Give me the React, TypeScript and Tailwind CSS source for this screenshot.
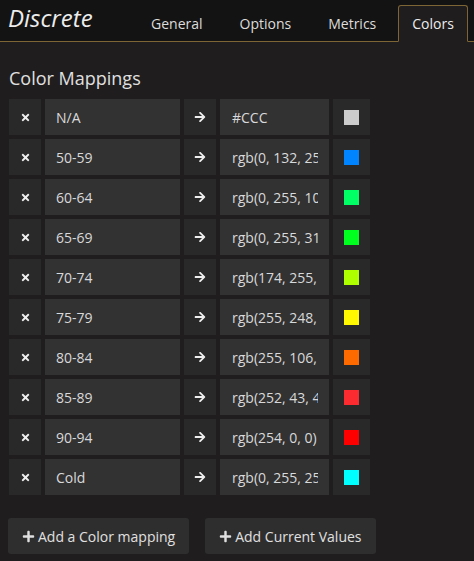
import React from "react";
import { FaTimes, FaArrowRight, FaPlus } from "react-icons/fa";

const rows: { from: string; to: string; color: string }[] = [
  { from: "N/A", to: "#CCC", color: "#cccccc" },
  { from: "50-59", to: "rgb(0, 132, 255)", color: "rgb(0, 132, 255)" },
  { from: "60-64", to: "rgb(0, 255, 100)", color: "rgb(0, 255, 100)" },
  { from: "65-69", to: "rgb(0, 255, 31)", color: "rgb(0, 255, 31)" },
  { from: "70-74", to: "rgb(174, 255, 0)", color: "rgb(174, 255, 0)" },
  { from: "75-79", to: "rgb(255, 248, 0)", color: "rgb(255, 248, 0)" },
  { from: "80-84", to: "rgb(255, 106, 0)", color: "rgb(255, 106, 0)" },
  { from: "85-89", to: "rgb(252, 43, 48)", color: "rgb(252, 43, 48)" },
  { from: "90-94", to: "rgb(254, 0, 0)", color: "rgb(254, 0, 0)" },
  { from: "Cold", to: "rgb(0, 255, 255)", color: "rgb(0, 255, 255)" },
];

export default function App() {
  return (
    <div
      className="w-[474px] h-[561px] bg-[#1f1d1d] text-[#d8d9da] overflow-hidden"
      style={{ fontFamily: '"Open Sans", "Noto Sans", sans-serif' }}
    >
      <div className="h-[42px] bg-[#141313] border-b border-[#7d6535] flex items-end">
        <div className="self-stretch flex items-center pl-[8px] pb-[5px] text-[24px] italic text-[#ececec] w-[136px]">
          Discrete
        </div>
        <div className="flex gap-[7px] h-[37px] -mb-px">
          {["General", "Options", "Metrics"].map((t) => (
            <div key={t} className="px-[14px] flex items-center text-[14px] text-[#dcdcdc] border border-transparent">
              {t}
            </div>
          ))}
          <div className="px-[13px] flex items-center text-[14px] text-[#ececec] bg-[#1f1d1d] border border-[#7d6535] border-b-[#1f1d1d] rounded-t-[3px]">
            Colors
          </div>
        </div>
      </div>

      <div className="px-[9px]">
        <div className="pt-[24px] pb-[8px] text-[18px] leading-[25px] text-[#e0e0e0]">Color Mappings</div>
        <div className="flex flex-col gap-[4px]">
          {rows.map((r) => (
            <div key={r.from} className="flex gap-[4px] h-[36px] text-[14px]">
              <div className="w-[32px] bg-[#2a2929] flex items-center justify-center">
                <FaTimes className="text-[#eeeeee] w-[11px] h-[11px]" />
              </div>
              <div className="w-[135px] bg-[#333232] flex items-center px-[11px]">
                <span className="overflow-hidden whitespace-nowrap">{r.from}</span>
              </div>
              <div className="w-[32px] bg-[#2a2929] flex items-center justify-center">
                <FaArrowRight className="text-[#eeeeee] w-[12px] h-[12px]" />
              </div>
              <div className="w-[109px] bg-[#333232] flex items-center pl-[12px] pr-[11px]">
                <span className="overflow-hidden whitespace-nowrap">{r.to}</span>
              </div>
              <div className="w-[37px] bg-[#2a2929] flex items-center justify-center">
                <div className="w-[15px] h-[15px]" style={{ backgroundColor: r.color }} />
              </div>
            </div>
          ))}
        </div>
        <div className="flex gap-[16px] mt-[23px] -ml-px">
          <div className="h-[36px] px-[14px] bg-[#2f2e2e] rounded-[3px] flex items-center gap-[3px] text-[14px] text-[#e0e0e0]">
            <FaPlus className="w-[13px] h-[13px]" />
            <span>Add a Color mapping</span>
          </div>
          <div className="h-[36px] px-[14px] bg-[#2f2e2e] rounded-[3px] flex items-center gap-[3px] text-[14px] text-[#e0e0e0]">
            <FaPlus className="w-[13px] h-[13px]" />
            <span>Add Current Values</span>
          </div>
        </div>
      </div>
    </div>
  );
}
